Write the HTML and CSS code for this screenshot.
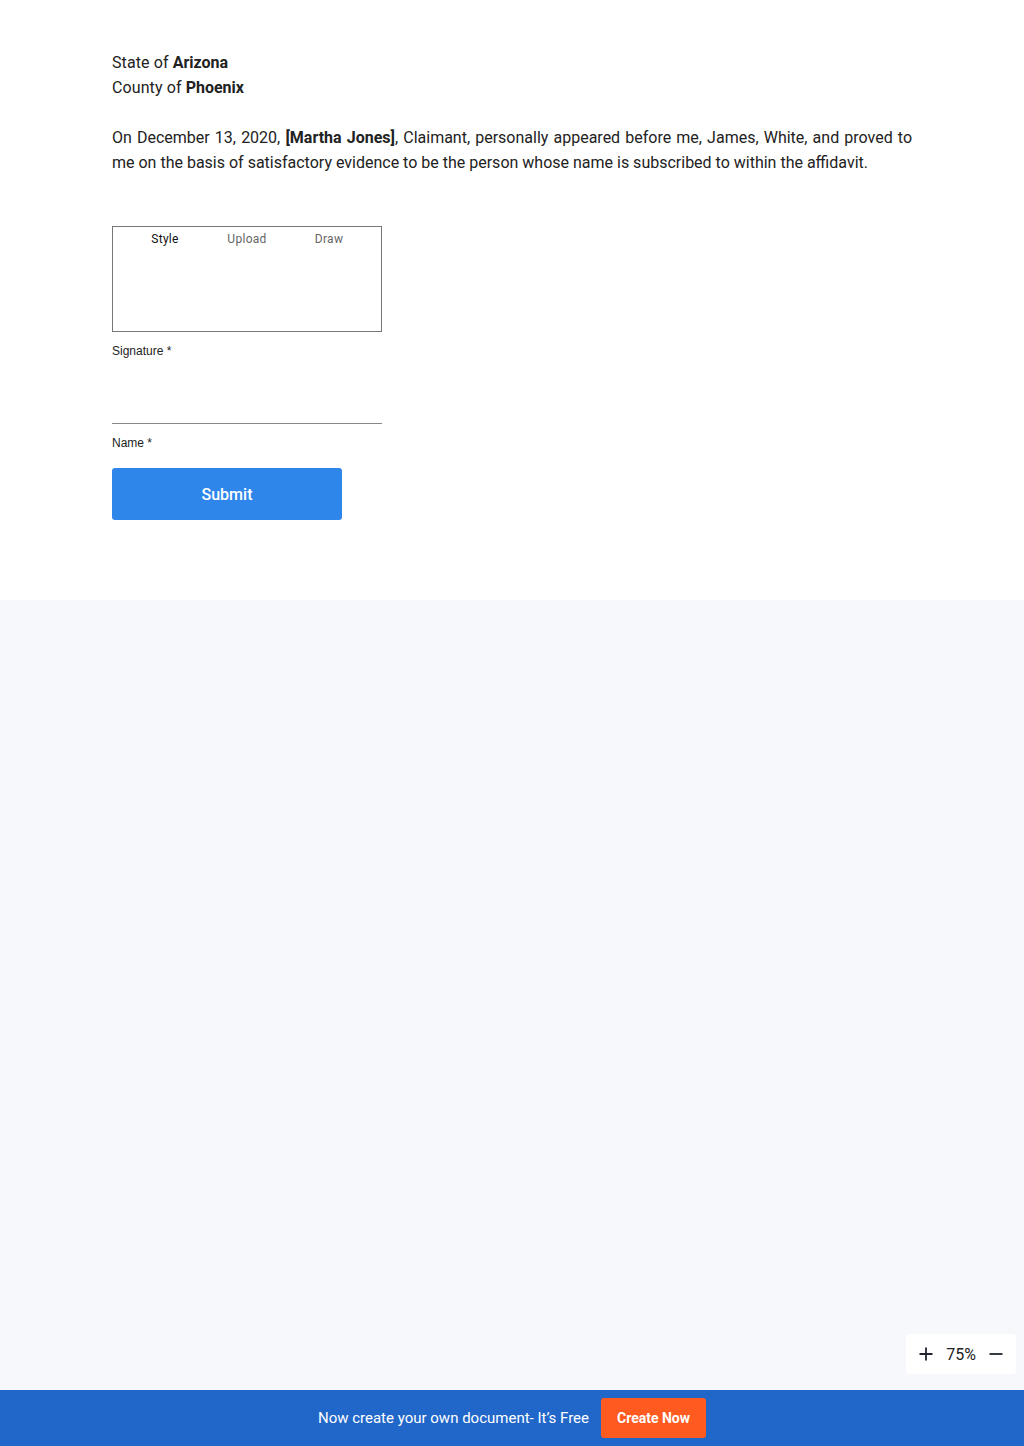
FILE: index.html
```html
<!DOCTYPE html>
<html>
<head>
<meta charset="utf-8">
<link rel="stylesheet" href="styles.css">
</head>
<body>
<div class="page">
  <section class="doc">
    <div class="content">
      <p class="place">State of <b>Arizona</b><br>County of <b>Phoenix</b></p>
      <p class="para">On December 13, 2020, <b>[Martha Jones]</b>, Claimant, personally appeared before me, James, White, and proved to me on the basis of satisfactory evidence to be the person whose name is subscribed to within the affidavit.</p>
      <div class="form">
        <div class="sigbox">
          <div class="tabs">
            <span class="tab active">Style</span>
            <span class="tab">Upload</span>
            <span class="tab">Draw</span>
          </div>
        </div>
        <div class="label">Signature *</div>
        <div class="nameline"></div>
        <div class="label">Name *</div>
        <button class="submit">Submit</button>
      </div>
    </div>
  </section>
  <section class="canvas">
    <div class="zoom">
      <svg class="zicon" width="16" height="16" viewBox="0 0 16 16"><path d="M8 1.5v13M1.5 8h13" stroke="#1f2430" stroke-width="1.8" fill="none"/></svg>
      <span class="zval">75%</span>
      <svg class="zicon" width="16" height="16" viewBox="0 0 16 16"><path d="M1.5 8h13" stroke="#1f2430" stroke-width="1.8" fill="none"/></svg>
    </div>
  </section>
  <footer class="bar">
    <span class="bartext">Now create your own document- It’s Free</span>
    <button class="create">Create Now</button>
  </footer>
</div>
</body>
</html>
```
FILE: styles.css
```css
html, body {
  margin: 0;
  padding: 0;
}
body {
  font-family: Roboto, "Liberation Sans", sans-serif;
  color: #222;
  background: #fff;
}
.page {
  width: 1024px;
  height: 1446px;
  display: flex;
  flex-direction: column;
}
.doc {
  height: 600px;
  background: #fff;
  flex: none;
}
.content {
  width: 800px;
  margin-left: 112px;
  padding-top: 50px;
}
.place, .para {
  margin: 0;
  font-size: 16px;
  line-height: 25px;
  letter-spacing: 0.1px;
}
.place b, .para b {
  font-weight: 700;
  letter-spacing: 0;
}
.para {
  margin-top: 25px;
  text-align: justify;
  letter-spacing: 0;
}
.form {
  margin-top: 51px;
  width: 270px;
}
.sigbox {
  height: 104px;
  border: 1px solid #777;
}
.tabs {
  display: flex;
  justify-content: center;
  padding-top: 5px;
}
.tab {
  width: 82px;
  text-align: center;
  font-size: 12px;
  line-height: 14px;
  color: #666;
  letter-spacing: 0.3px;
}
.tab.active {
  color: #111;
}
.label {
  font-family: "Liberation Sans", Arial, sans-serif;
  font-size: 12px;
  line-height: 14px;
  color: #222;
  margin-top: 12px;
}
.nameline {
  height: 1px;
  background: #888;
  margin-top: 65px;
}
.label + .submit {
  margin-top: 18px;
}
.submit {
  display: block;
  width: 230px;
  height: 52px;
  border: none;
  border-radius: 3px;
  background: #2e86eb;
  color: #fff;
  font-family: Roboto, sans-serif;
  font-size: 16px;
  font-weight: 500;
  padding: 0;
}
.canvas {
  flex: 1;
  background: #f6f8fc;
  display: flex;
  justify-content: flex-end;
  align-items: flex-end;
  padding: 0 8px 16px 0;
}
.zoom {
  width: 110px;
  height: 40px;
  background: #fff;
  border-radius: 4px;
  display: flex;
  align-items: center;
  justify-content: space-between;
  padding: 0 12px;
  box-sizing: border-box;
}
.zval {
  font-size: 16px;
  color: #222;
}
.bar {
  height: 56px;
  flex: none;
  background: #2166c9;
  display: flex;
  align-items: center;
  justify-content: center;
  gap: 12px;
}
.bartext {
  color: #fff;
  font-size: 15px;
}
.create {
  height: 40px;
  width: 105px;
  border: none;
  border-radius: 3px;
  background: #ff5a1f;
  color: #fff;
  font-family: Roboto, sans-serif;
  font-weight: 700;
  font-size: 14px;
  padding: 0;
}
```
